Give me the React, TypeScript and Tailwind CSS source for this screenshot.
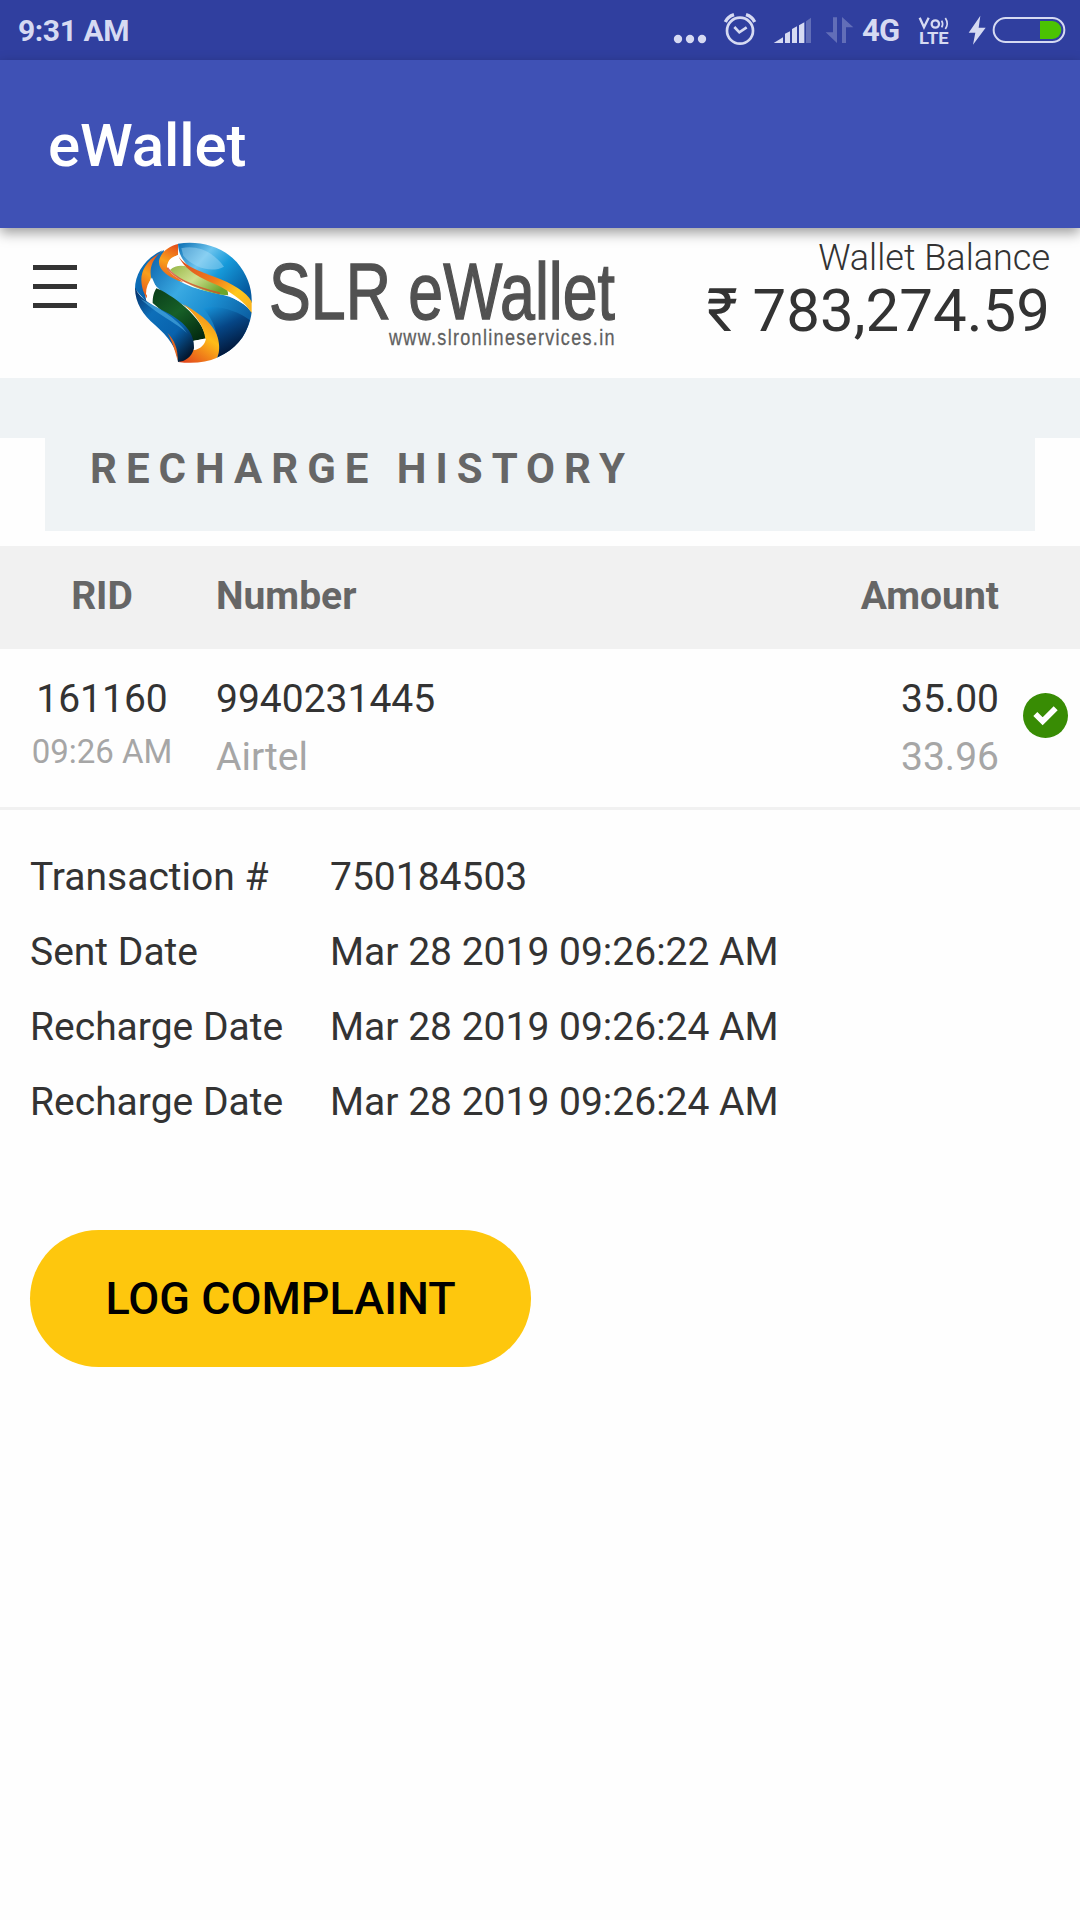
import React from "react";

const INK = "#d6daf2";

function StatusIcons() {
  return (
    <div className="flex h-[60px]">
      <svg className="h-[60px] w-[45px]" viewBox="30 0 135 180" fill={INK}>
        <circle cx="54" cy="117" r="12.5" />
        <circle cx="90" cy="117" r="12.5" />
        <circle cx="126" cy="117" r="12.5" />
      </svg>
      <svg className="h-[60px] w-[50px]" viewBox="165 0 150 180" fill="none" stroke={INK}>
        <circle cx="240" cy="92" r="39" strokeWidth="8" />
        <path d="M223 81 L238 97 L260 82" strokeWidth="8" />
        <path d="M196 66 Q203 50 222 44" strokeWidth="10" />
        <path d="M284 66 Q277 50 258 44" strokeWidth="10" />
      </svg>
      <svg className="h-[60px] w-[55px]" viewBox="315 0 165 180" fill={INK}>
        <path d="M341 129 L369 112 V129 Z" />
        <path d="M375 101 L390 94 V129 H375 Z" />
        <path d="M396 87 L411 79 V129 H396 Z" />
        <path d="M417 76 L433 67 V129 H417 Z" />
        <path d="M438 64 L453 53 V129 H438 Z" opacity="0.3" />
      </svg>
      <svg className="h-[60px] w-[40px]" viewBox="480 0 120 180" fill={INK} opacity="0.3">
        <path d="M519 52 H531 V129 L497 97 H519 Z" />
        <path d="M546 129 H558 V82 H580 L546 51 Z" />
      </svg>
      <div className="w-[45px] pl-[2px] text-[31px] font-bold leading-[61px] tracking-[-0.8px] text-[#d6daf2]">4G</div>
      <svg className="h-[60px] w-[55px]" viewBox="735 0 165 180" fill="none" stroke={INK}>
        <path d="M779 53 L792 82 L806 53" strokeWidth="7" />
        <circle cx="826" cy="72" r="11" strokeWidth="7" />
        <path d="M845 62 Q851 72 845 82 M856 54 Q867 71 856 87" strokeWidth="5" />
        <text x="777" y="131" fontSize="47" fontWeight="700" fill={INK} stroke="none" textLength="89" lengthAdjust="spacingAndGlyphs">
          LTE
        </text>
      </svg>
      <svg className="h-[60px] w-[120px]" viewBox="900 0 360 180">
        <path d="M961 47 L926 98 H946 L939 134 L977 83 H956 Z" fill={INK} />
        <path d="M1140 63 H1177 A27 27 0 0 1 1177 117 H1140 Z" fill="#4bc302" />
        <rect x="1001" y="54" width="212" height="72" rx="36" fill="none" stroke={INK} strokeWidth="6" />
      </svg>
    </div>
  );
}

function Globe() {
  return (
    <svg className="size-[150px] shrink-0" viewBox="0 0 450 450">
      <defs>
        <linearGradient id="top" x1="0" y1="0" x2="1" y2="0.7">
          <stop offset="0" stopColor="#0b6fb4" />
          <stop offset="0.35" stopColor="#6cc4ee" />
          <stop offset="0.6" stopColor="#169ada" />
          <stop offset="1" stopColor="#055a9f" />
        </linearGradient>
        <linearGradient id="mid" x1="0" y1="0" x2="1" y2="0.8">
          <stop offset="0" stopColor="#0a5ea8" />
          <stop offset="0.35" stopColor="#3aaae2" />
          <stop offset="0.6" stopColor="#1c8fd2" />
          <stop offset="1" stopColor="#064f92" />
        </linearGradient>
        <linearGradient id="shade" x1="0.1" y1="0" x2="0.55" y2="1">
          <stop offset="0" stopColor="#1790d6" />
          <stop offset="0.45" stopColor="#064686" />
          <stop offset="1" stopColor="#01102e" />
        </linearGradient>
        <linearGradient id="left" x1="0" y1="0" x2="0.8" y2="1">
          <stop offset="0" stopColor="#052e66" />
          <stop offset="0.35" stopColor="#0d6fb9" />
          <stop offset="0.7" stopColor="#0862ad" />
          <stop offset="1" stopColor="#03172f" />
        </linearGradient>
        <linearGradient id="fire" x1="0.6" y1="0" x2="0.3" y2="1">
          <stop offset="0" stopColor="#e6501a" />
          <stop offset="0.5" stopColor="#f9a01c" />
          <stop offset="1" stopColor="#e5571d" />
        </linearGradient>
        <linearGradient id="band" x1="0" y1="0" x2="1" y2="0.8">
          <stop offset="0" stopColor="#d9491f" />
          <stop offset="0.5" stopColor="#f07a1c" />
          <stop offset="0.8" stopColor="#ffc81c" />
          <stop offset="1" stopColor="#f9b51d" />
        </linearGradient>
        <linearGradient id="flame" x1="0.7" y1="0" x2="0.2" y2="1">
          <stop offset="0" stopColor="#e77a20" />
          <stop offset="0.45" stopColor="#ffbd18" />
          <stop offset="1" stopColor="#e3491b" />
        </linearGradient>
        <linearGradient id="lime" x1="0" y1="0" x2="1" y2="0.6">
          <stop offset="0" stopColor="#96b648" />
          <stop offset="0.5" stopColor="#cfe08e" />
          <stop offset="1" stopColor="#6da52a" />
        </linearGradient>
        <linearGradient id="forest" x1="0" y1="0" x2="0.8" y2="1">
          <stop offset="0" stopColor="#0a3d19" />
          <stop offset="0.5" stopColor="#176027" />
          <stop offset="1" stopColor="#032b10" />
        </linearGradient>
      </defs>
      {/* upper dome */}
      <path d="M174 56 C235 46 305 62 350 111 C382 148 397 190 395 234 C370 200 330 184 285 166 C235 148 176 120 174 56 Z" fill="url(#top)" />
      <path d="M184 70 C225 60 275 75 312 125 C275 145 220 128 190 92 Z" fill="#b5e2f7" opacity="0.4" />
      {/* left rim */}
      <path d="M128 76 C76 98 45 145 45 192 L80 232 C68 190 80 130 128 76 Z" fill="url(#left)" />
      <path d="M122 83 C82 104 63 136 64 166 C65 190 72 206 80 220 C84 186 96 136 122 83 Z" fill="url(#fire)" />
      {/* middle blue ribbon */}
      <path d="M132 75 C92 100 86 140 96 166 C106 190 150 218 190 240 C240 272 290 320 291 398 C345 375 386 330 395 262 C365 222 325 212 280 203 C215 190 122 165 132 75 Z" fill="url(#mid)" />
      <path d="M96 158 C84 172 78 188 78 207 L98 238 L110 190 Z" fill="#fff" />
      <path d="M250 250 C290 236 355 258 389 285 C378 335 345 375 294 396 C300 330 280 285 250 250 Z" fill="url(#shade)" />
      {/* upper orange band with its highlight */}
      <path d="M174 57 C146 64 122 82 117 108 C114 134 146 158 190 172 C174 158 142 144 142 126 C142 105 155 96 174 91 Z" fill="url(#fire)" />
      <path d="M174 90 C155 97 141 112 141 128 C150 138 165 130 186 122 C178 112 174 102 174 90 Z" fill="#fff" />
      <path d="M150 135 C165 122 185 119 205 127 C240 145 290 160 323 194 L325 211 C275 208 195 185 150 135 Z" fill="url(#lime)" />
      <path d="M142 128 C165 165 240 190 300 205" fill="none" stroke="#d84a2a" strokeWidth="5" opacity="0.8" />
      <path d="M322 192 C345 205 370 215 385 245 L325 211 Z" fill="#fff" />
      <path d="M174 91 C190 122 240 140 285 156 C335 175 380 200 395 230 L395 264 C375 232 345 210 303 186 C260 165 200 148 174 91 Z" fill="url(#band)" />
      {/* dark green field */}
      <path d="M109 190 C125 195 165 219 196 247 C230 278 252 307 258 340 L220 348 C200 305 150 280 98 234 C98 213 102 202 109 190 Z" fill="url(#forest)" />
      {/* lower flame */}
      <path d="M190 238 C235 263 288 300 295 345 C300 370 297 387 291 398 C260 412 220 417 174 411 C200 403 216 390 221 370 L256 341 C252 305 228 270 190 238 Z" fill="url(#flame)" />
      <path d="M221 347 L258 341 C254 360 242 371 220 376 Z" fill="#fff" />
      {/* lower left ribbon */}
      <path d="M45 188 C62 228 105 242 150 268 C195 295 224 325 222 370 C215 397 195 410 174 411 C171 370 145 335 105 300 C70 270 45 235 45 188 Z" fill="url(#left)" />
      <path d="M62 222 C108 245 170 277 203 327 C182 300 120 275 62 222 Z" fill="#5dc0ef" opacity="0.5" />
      <path d="M142 323 C164 347 174 370 173 407 C165 375 155 345 142 323 Z" fill="#e5661f" />
    </svg>
  );
}

function Brand() {
  return (
    <svg className="-ml-[10px] h-[150px] w-[370px] shrink-0" viewBox="-10 0 370 150" fontFamily="Liberation Sans, Arial, sans-serif">
      <text x="-1" y="94" fontSize="79" fill="#515151" stroke="#515151" strokeWidth="1.4" textLength="346" lengthAdjust="spacingAndGlyphs">
        SLR eWallet
      </text>
      <g transform="translate(119 120) scale(0.82 1)">
        <text fontSize="22" fill="#606060" stroke="#606060" strokeWidth="0.3" textLength="275" lengthAdjust="spacing">
          www.slronlineservices.in
        </text>
      </g>
    </svg>
  );
}

const details = [
  ["Transaction #", "750184503"],
  ["Sent Date", "Mar 28 2019 09:26:22 AM"],
  ["Recharge Date", "Mar 28 2019 09:26:24 AM"],
  ["Recharge Date", "Mar 28 2019 09:26:24 AM"],
];

export default function App() {
  return (
    <div className="flex h-[1920px] w-[1080px] flex-col overflow-hidden bg-[#fefefe] font-[Roboto,sans-serif] text-[39px] text-[#333333]">
      <div className="flex h-[60px] shrink-0 items-start justify-between bg-[#303f9f] pl-[18px]">
        <span className="text-[30px] font-bold leading-[61px] tracking-[-0.4px] text-[#d6daf2]">9:31 AM</span>
        <StatusIcons />
      </div>
      <header className="relative z-10 flex h-[168px] shrink-0 items-center bg-[#3f51b5] pl-[48px] shadow-[0_5px_12px_rgba(0,0,0,0.38)]">
        <h1 className="pt-[4px] text-[60px] font-medium leading-[70px] tracking-[-0.1px] text-white">eWallet</h1>
      </header>

      <div className="flex h-[150px] shrink-0">
        <div className="flex w-[120px] flex-col gap-[14px] pl-[33px] pt-[37px]">
          <span className="h-[5px] w-[44px] bg-[#333]" />
          <span className="h-[5px] w-[44px] bg-[#333]" />
          <span className="h-[5px] w-[44px] bg-[#333]" />
        </div>
        <div className="-mt-[3px] flex">
          <Globe />
          <Brand />
        </div>
        <div className="flex-1 pr-[30px] text-right">
          <div className="mt-[6px] text-[36px] font-light leading-[48px]">Wallet Balance</div>
          <div className="-mt-[1px] whitespace-nowrap text-[60px] leading-[60px]">₹ 783,274.59</div>
        </div>
      </div>

      <div className="h-[60px] shrink-0 bg-[#eff3f5]" />
      <h2 className="mx-[45px] mb-[15px] h-[93px] shrink-0 bg-[#eff3f5] pl-[45px] text-[42px] font-bold leading-[61px] tracking-[9px] text-[#666]">
        RECHARGE HISTORY
      </h2>

      <div className="flex h-[103px] shrink-0 bg-[#f1f1f1] font-bold leading-[101px] text-[#666]">
        <div className="w-[204px] text-center">RID</div>
        <div className="flex-1 pl-[12px]">Number</div>
        <div className="pr-[81px]">Amount</div>
      </div>

      <div className="flex h-[161px] shrink-0 border-b-[3px] border-[#f1f1f1] pt-[21px] leading-[58px]">
        <div className="w-[204px] text-center">
          <div>161160</div>
          <div className="text-[33px] leading-[48px] text-[#a6a6a6]">09:26 AM</div>
        </div>
        <div className="flex-1 pl-[12px]">
          <div>9940231445</div>
          <div className="text-[#a6a6a6]">Airtel</div>
        </div>
        <div className="pr-[24px] text-right">
          <div>35.00</div>
          <div className="text-[#a6a6a6]">33.96</div>
        </div>
        <svg className="mr-[12px] mt-[23px] size-[45px]" viewBox="0 0 135 135">
          <circle cx="67.5" cy="67.5" r="67.5" fill="#388c04" />
          <path d="M37 63 L59 85 L98 46" fill="none" stroke="#fff" strokeWidth="17" />
        </svg>
      </div>

      <div className="pl-[30px] pt-[30px] leading-[75px]">
        {details.map(([label, value], i) => (
          <div key={i} className="flex h-[75px]">
            <div className="w-[300px]">{label}</div>
            <div>{value}</div>
          </div>
        ))}
      </div>

      <button className="ml-[30px] mt-[90px] h-[137px] w-[501px] shrink-0 rounded-full bg-[#fec70d] text-[45px] font-medium text-black">
        LOG COMPLAINT
      </button>
    </div>
  );
}
